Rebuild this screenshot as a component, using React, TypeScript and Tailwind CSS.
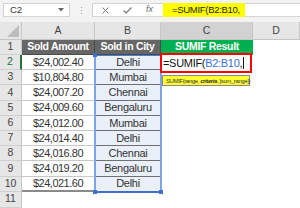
import React from 'react';

const FONT = '"Liberation Sans", Arial, sans-serif';

const DATA: [string, string][] = [
  ['$24,002.40', 'Delhi'],
  ['$10,804.80', 'Mumbai'],
  ['$24,007.20', 'Chennai'],
  ['$24,009.60', 'Bengaluru'],
  ['$24,012.00', 'Mumbai'],
  ['$24,014.40', 'Delhi'],
  ['$24,016.80', 'Chennai'],
  ['$24,019.20', 'Bengaluru'],
  ['$24,021.60', 'Delhi'],
];

function FormulaBar() {
  return (
    <div className="flex h-[22px] items-start bg-[#f3f3f3] pt-[3px]">
      <div className="ml-[3px] flex h-[14px] w-[67px] items-center justify-between border border-[#d4d4d4] bg-white pl-[6px] pr-[5px]">
        <span className="text-[9.5px] text-[#333]">C2</span>
        <svg width="6" height="4" viewBox="0 0 6 4">
          <polygon points="0,0 6,0 3,3.5" fill="#666" />
        </svg>
      </div>
      <div className="flex h-[14px] w-[22px] flex-col items-center justify-center gap-[2px]">
        <span className="h-[1px] w-[1px] bg-[#999]" />
        <span className="h-[1px] w-[1px] bg-[#999]" />
        <span className="h-[1px] w-[1px] bg-[#999]" />
      </div>
      <div className="flex h-[14px] flex-1 items-center border-y border-l border-[#d4d4d4] bg-white">
        <div className="flex w-[70px] items-center">
          <svg className="ml-[9px]" width="7" height="7" viewBox="0 0 7 7">
            <path d="M0.5 0.5 L6.5 6.5 M6.5 0.5 L0.5 6.5" stroke="#777" strokeWidth="1" />
          </svg>
          <svg className="ml-[14px]" width="9" height="7" viewBox="0 0 9 7">
            <path d="M0.5 3.5 L3.2 6 L8.5 0.5" stroke="#777" strokeWidth="1.2" fill="none" />
          </svg>
          <span className="ml-[14px] text-[9px] italic text-[#666]">fx</span>
        </div>
        <div className="flex h-[14px] w-[82px] items-center bg-[#ffff00] pl-[9px] text-[9.5px] tracking-[-0.3px] whitespace-nowrap text-[#222]">
          =SUMIF(B2:B10,
        </div>
      </div>
    </div>
  );
}

function ColHeader({ label, w, active }: { label: string; w: string; active?: boolean }) {
  return (
    <div
      className={`flex items-center justify-center border-r border-b border-[#c6c6c6] text-[10.5px] text-[#444] ${w} ${
        active ? 'bg-[#d2d2d2]' : 'bg-[#e6e6e6]'
      }`}
    >
      {label}
    </div>
  );
}

function RowHeader({ n, active, h }: { n: number; active?: boolean; h: string }) {
  return (
    <div
      className={`flex w-[22px] shrink-0 items-center justify-center border-b border-[#d0d0d0] bg-[#e6e6e6] text-[10.5px] ${h} ${
        active ? 'border-r-2 border-r-[#217346] text-[#217346]' : 'border-r border-r-[#c6c6c6] text-[#444]'
      }`}
    >
      {n}
    </div>
  );
}

export default function App() {
  return (
    <div className="h-[208px] w-[300px] overflow-hidden bg-white" style={{ fontFamily: FONT }}>
      <FormulaBar />
      <div className="relative">
        <div className="flex h-[18px]">
          <div className="relative w-[22px] border-r border-b border-[#c6c6c6] bg-[#e6e6e6]">
            <svg className="absolute right-[2px] bottom-[2px]" width="12" height="12" viewBox="0 0 12 12">
              <polygon points="12,0 12,12 0,12" fill="#bdbdbd" />
            </svg>
          </div>
          <ColHeader label="A" w="w-[73px]" />
          <ColHeader label="B" w="w-[66px]" />
          <ColHeader label="C" w="w-[92px]" active />
          <ColHeader label="D" w="w-[47px]" />
        </div>

        <div className="flex h-[15px]">
          <RowHeader n={1} h="h-[15px]" />
          <div className="flex w-[73px] items-center justify-center border-r border-b border-[#4a4a4a] bg-[#666666] text-[10.5px] font-bold tracking-[-0.3px] whitespace-nowrap text-white">
            Sold Amount
          </div>
          <div className="flex w-[66px] items-center justify-center border-r border-b border-[#4a4a4a] bg-[#666666] text-[10.5px] font-bold tracking-[-0.3px] whitespace-nowrap text-white">
            Sold in City
          </div>
          <div className="flex w-[92px] items-center justify-center border-b border-[#0a8a40] bg-[#00b050] text-[10.5px] font-bold tracking-[-0.3px] whitespace-nowrap text-white">
            SUMIF Result
          </div>
        </div>

        {DATA.map(([amount, city], i) => (
          <div key={i} className="flex h-[15.2px]">
            <RowHeader n={i + 2} active={i === 0} h="h-[15.2px]" />
            <div
              className={`flex w-[73px] items-center justify-center border-r border-[#bfbfbf] text-[11px] tracking-[-0.5px] whitespace-nowrap text-[#333] ${
                i === DATA.length - 1 ? 'border-b-2 border-b-[#8a8a8a]' : 'border-b border-b-[#c8c8c8]'
              }`}
            >
              {amount}
            </div>
            <div className="flex w-[66px] items-center justify-center border-b border-[#707070] bg-[#eaf0fa] text-[11px] tracking-[-0.3px] whitespace-nowrap text-[#333]">
              {city}
            </div>
            <div className="w-[92px]" />
          </div>
        ))}

        <div className="flex h-[16px]">
          <RowHeader n={11} h="h-[16px]" />
        </div>

        {/* range highlight B2:B10 */}
        <div className="pointer-events-none absolute top-[33px] left-[94px] h-[138px] w-[68px] border-x-2 border-t border-b-2 border-x-[#7ea3e8] border-t-[#4a7fd6] border-b-[#3f6fc8]" />
        <div className="absolute top-[31px] left-[93px] h-[4px] w-[4px] bg-[#3f6fc8]" />
        <div className="absolute top-[168px] left-[93px] h-[4px] w-[4px] bg-[#3f6fc8]" />
        <div className="absolute top-[168px] left-[159px] h-[4px] w-[4px] bg-[#3f6fc8]" />

        {/* cell editor C2 */}
        <div className="absolute top-[31px] left-[160px] flex h-[20px] w-[92px] items-center border-2 border-[#ff0000] bg-white pl-[1px] text-[11px] tracking-[-0.3px] whitespace-nowrap text-[#111]">
          =SUMIF(<span className="text-[#3b6fd1]">B2:B10</span>,
          <span className="ml-[1px] h-[12px] w-[1px] bg-[#111]" />
        </div>

        {/* function tooltip */}
        <div className="absolute top-[53px] left-[162px] flex h-[11px] w-[88px] items-center border border-[#8a8a8a] bg-[#ffff33] pl-[3px] text-[6px] leading-none tracking-[-0.4px] whitespace-nowrap text-[#333]">
          SUMIF(range,&nbsp;<b>criteria</b>,&nbsp;[sum_range])
        </div>
      </div>
    </div>
  );
}
